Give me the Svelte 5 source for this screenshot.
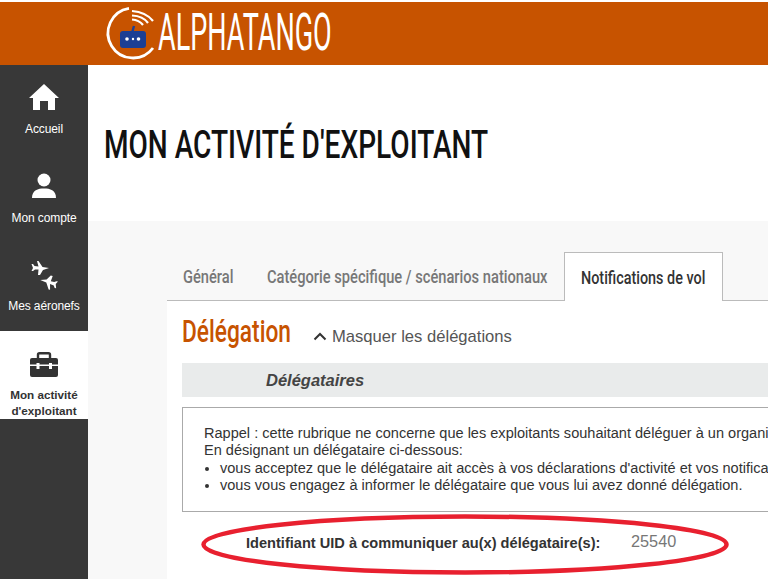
<script>
  const nav = [
    { label: ['Accueil'], icon: 'home' },
    { label: ['Mon compte'], icon: 'user' },
    { label: ['Mes aéronefs'], icon: 'planes' },
    { label: ['Mon activité', "d'exploitant"], icon: 'case', active: true }
  ];
  const plane = 'M21 10 L14.500 9 L10.500 3 L9 3 L10.500 8.600 L6.500 8 L5 6 L3.500 6 L5 10 L3.500 13 L5 13 L7 11.500 L10.500 11.500 L10 17 L12 17 L15 12 Z';
</script>

<div class="page">
  <header class="top">
    <div class="logo">
      <svg width="53" height="56" viewBox="0 0 53 56" class="mark">
        <path d="M24 3.300 A25 25 0 1 0 48 43" fill="none" stroke="#fff" stroke-width="2.800"/>
        <path d="M27 6 Q41 7 48 16" fill="none" stroke="#fff" stroke-width="2.200"/>
        <path d="M27 10.500 Q38 11 43 18" fill="none" stroke="#fff" stroke-width="2.200"/>
        <path d="M27 14.500 Q34 15 38 20" fill="none" stroke="#fff" stroke-width="2.200"/>
        <path d="M27 28 L29 21" stroke="#1c3f94" stroke-width="2.400"/>
        <rect x="15" y="26" width="26" height="17" rx="3" fill="#1c3f94"/>
        <circle cx="22" cy="34" r="1.800" fill="#fff"/><circle cx="28" cy="34" r="1.200" fill="#fff"/><circle cx="33.500" cy="34" r="1.800" fill="#fff"/>
      </svg>
      <span class="brand">ALPHATANGO</span>
    </div>
  </header>

  <div class="body">
    <nav class="side">
      {#each nav as item}
        <div class="item" class:active={item.active}>
          <svg class="ico" width="32" height="32" viewBox="0 0 32 32">
            {#if item.icon === 'home'}
              <path d="M16 3 L31 17 L27 17 L27 29 L20 29 L20 20 L12 20 L12 29 L5 29 L5 17 L1 17 Z" fill="currentColor"/>
            {:else if item.icon === 'user'}
              <circle cx="16" cy="10" r="6.500" fill="currentColor"/>
              <path d="M4 28 C4 20 10 18.500 16 18.500 C22 18.500 28 20 28 28 Z" fill="currentColor"/>
            {:else if item.icon === 'planes'}
              <path d={plane} fill="currentColor"/>
              <path d={plane} fill="currentColor" transform="translate(20 24) rotate(195) translate(-13 -10)"/>
            {:else}
              <rect x="10" y="6.200" width="12" height="7" rx="1.500" fill="none" stroke="currentColor" stroke-width="2.400"/>
              <rect x="2" y="11" width="28" height="19" rx="2" fill="currentColor"/>
              <rect x="2" y="17.500" width="28" height="1.500" fill="#fff"/>
              <rect x="8.500" y="16" width="3" height="6" fill="#fff"/>
              <rect x="21" y="16" width="3" height="6" fill="#fff"/>
            {/if}
          </svg>
          <div class="lab">{#each item.label as l}<div>{l}</div>{/each}</div>
        </div>
      {/each}
    </nav>

    <main class="main">
      <div class="hero"><h1><span>MON ACTIVITÉ D'EXPLOITANT</span></h1></div>
      <div class="grey">
        <div class="tabs">
          <div class="tab t1"><span>Général</span></div>
          <div class="tab t2"><span>Catégorie spécifique / scénarios nationaux</span></div>
          <div class="tab on"><span>Notifications de vol</span></div>
        </div>
        <section class="panel">
          <div class="head">
            <h2><span>Délégation</span></h2>
            <div class="toggle">
              <svg width="14" height="9" viewBox="0 0 14 9"><path d="M1.500 7.500 L7 2 L12.500 7.500" fill="none" stroke="#333" stroke-width="2"/></svg>
              Masquer les délégations
            </div>
          </div>
          <div class="bar">Délégataires</div>
          <div class="box">
            <p>Rappel : cette rubrique ne concerne que les exploitants souhaitant déléguer à un organisme tiers</p>
            <p>En désignant un délégataire ci-dessous:</p>
            <ul>
              <li>vous acceptez que le délégataire ait accès à vos déclarations d'activité et vos notifications</li>
              <li>vous vous engagez à informer le délégataire que vous lui avez donné délégation.</li>
            </ul>
          </div>
          <div class="uid"><b>Identifiant UID à communiquer au(x) délégataire(s):</b><span>25540</span></div>
        </section>
      </div>
    </main>
  </div>

  <svg class="ring" width="540" height="66" viewBox="0 0 540 66">
    <ellipse cx="270" cy="32.500" rx="261.500" ry="28" fill="none" stroke="#e8202f" stroke-width="4.500"/>
  </svg>
</div>

<style>
  :global(body) { margin: 0; background: #fff; }
  .page { position: relative; width: 768px; height: 579px; overflow: hidden; font-family: "Liberation Sans", Arial, sans-serif; }
  .page::before { content: ""; display: block; height: 0.02px; }
  .top { height: 63px; margin-top: 2px; background: #c75300; padding-left: 105px; box-sizing: border-box; }
  .logo { display: flex; align-items: center; height: 63px; }
  .mark { margin-top: -1px; flex: none; overflow: visible; }
  .brand { color: #fff; font-family: Roboto, sans-serif; font-weight: 400; font-size: 51px; line-height: 1; transform: scaleX(.53); transform-origin: left center; white-space: nowrap; margin-top: -3px; }
  .body { display: flex; height: 514px; }
  .side { width: 88px; background: #383838; flex: none; }
  .item { height: 88.700px; box-sizing: border-box; padding-top: 16px; color: #fff; text-align: center; font-size: 12px; line-height: 17px; letter-spacing: -.1px; }
  .item.active { background: #fff; color: #333; font-weight: 700; font-size: 11.700px; line-height: 16px; height: 88px; padding-top: 16px; letter-spacing: 0; }
  .ico { display: block; margin: 0 auto 8px; }
  .main { flex: 1; min-width: 0; }
  .hero { height: 156px; box-sizing: border-box; padding: 60px 0 0 16px; }
  h1 { margin: 0; font: 500 38px/40px Roboto, sans-serif; color: #111; white-space: nowrap; }
  h1 span { display: inline-block; transform: scaleX(.738); transform-origin: left center; }
  .grey { background: #f8f8f8; height: 358px; padding: 31px 0 0 79px; box-sizing: border-box; }
  .tabs { display: flex; height: 48px; border-bottom: 1px solid #bbb; font: 500 19px/50px Roboto, sans-serif; color: #777; white-space: nowrap; }
  .tab { box-sizing: border-box; height: 49px; }
  .tab span { display: inline-block; transform: scaleX(.772); transform-origin: left center; }
  .t1 { width: 100px; padding-left: 16px; }
  .t2 { width: 297px; }
  .on { width: 159px; padding-left: 16px; background: #fff; border: 1px solid #bbb; border-bottom: 0; color: #333; }
  .on span { transform: scaleX(.757); }
  .panel { background: #fff; height: 278px; padding: 0 0 0 15px; white-space: nowrap; }
  .head { display: flex; align-items: center; height: 60px; }
  h2 { margin: 0; width: 131px; font: 500 32px/36px Roboto, sans-serif; color: #c75300; }
  h2 span { display: inline-block; transform: scaleX(.71); transform-origin: left center; }
  .toggle { font-size: 16.600px; color: #555; display: flex; align-items: center; gap: 5px; margin-top: 12px; }
  .toggle svg { margin-top: -2px; }
  .bar { height: 34px; background: #e9ebeb; font: italic 700 16.500px/34px "Liberation Sans", sans-serif; color: #444; padding-left: 84px; margin-top: 2px; }
  .box { margin-top: 10px; height: 105px; box-sizing: border-box; border: 1px solid #aaa; border-right: 0; padding: 17px 0 0 21px; font-size: 14.550px; line-height: 17.400px; color: #333; overflow: hidden; }
  .box p { margin: 0; }
  .box ul { margin: 0; padding: 0 0 0 16px; }
  .uid { display: flex; padding: 23px 0 0 64px; font-size: 14.600px; color: #333; align-items: center; }
  .uid b { width: 385px; }
  .uid span { color: #777; font-size: 16.300px; margin-top: -3px; }
  .ring { position: absolute; left: 195px; top: 512px; }
</style>
